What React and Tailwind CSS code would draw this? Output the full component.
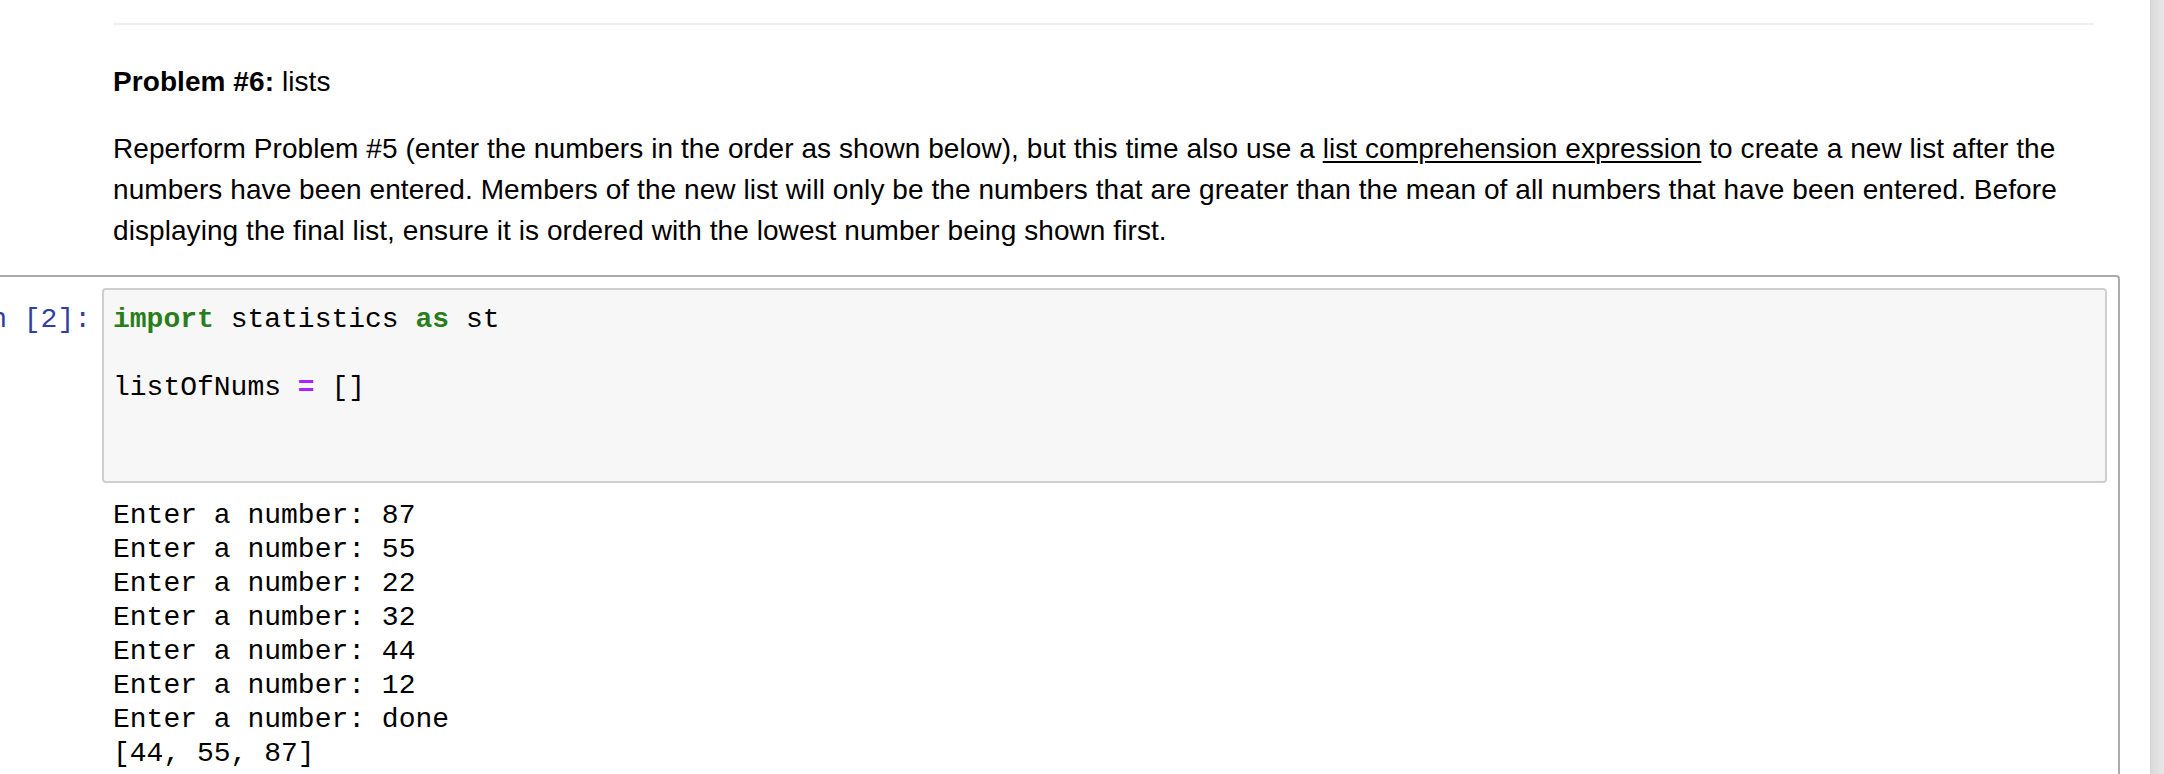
import React from "react";

const sans = "font-['Liberation_Sans',Arial,sans-serif]";
const mono = "font-['Liberation_Mono','DejaVu_Sans_Mono',monospace]";

function CodeLine({ children }) {
  return <div className="h-[34px] leading-[34px] whitespace-pre">{children}</div>;
}

export default function App() {
  const outputs = ["87", "55", "22", "32", "44", "12", "done"];
  return (
    <div className="flex w-full h-[774px] overflow-hidden bg-white text-black">
      <div className="flex-1 min-w-0 overflow-hidden">
        <div className={`pt-[23px] pl-[113px] pr-[56px] ${sans} text-[28px] tracking-[0.07px]`}>
          <div className="h-[2px] bg-[#eeeeee]" />
          <p className="mt-[37px] leading-[40px]">
            <strong className="font-bold">Problem #6:</strong> lists
          </p>
          <p className="mt-[26px] leading-[41px]">
            Reperform Problem #5 (enter the numbers in the order as shown below), but this time also use a{" "}
            <u className="decoration-2 underline-offset-[3px]">list comprehension expression</u> to
            create a new list after the numbers have been entered. Members of the new list will only be the numbers
            that are greater than the mean of all numbers that have been entered. Before displaying the final list,
            ensure it is ordered with the lowest number being shown first.
          </p>
        </div>

        <div className={`mt-[24px] -ml-[40px] mr-[30px] border-2 border-[#ababab] rounded-[4px] p-[11px] ${mono} text-[28px]`}>
          <div className="flex">
            <div className="w-[129px] shrink-0 pt-[15px] pr-[11px] text-right text-[#303f9f] leading-[34px] whitespace-pre">
              In [2]:
            </div>
            <div className="flex-1 min-w-0 bg-[#f7f7f7] border-2 border-[#cfcfcf] rounded-[4px] pt-[13px] pb-[8px] pl-[9px]">
              <CodeLine>
                <span className="text-[#2a7d1c] font-bold">import</span> statistics{" "}
                <span className="text-[#2a7d1c] font-bold">as</span> st
              </CodeLine>
              <CodeLine> </CodeLine>
              <CodeLine>
                listOfNums <span className="text-[#aa22ff] font-bold">=</span> []
              </CodeLine>
              <CodeLine> </CodeLine>
              <CodeLine> </CodeLine>
            </div>
          </div>
          <div className="flex mt-[16px]">
            <div className="w-[129px] shrink-0" />
            <div className="flex-1 min-w-0 pl-[11px]">
              {outputs.map((v, i) => (
                <CodeLine key={i}>Enter a number: {v}</CodeLine>
              ))}
              <CodeLine>[44, 55, 87]</CodeLine>
            </div>
          </div>
        </div>
      </div>
      <div className="w-[14px] shrink-0 bg-gradient-to-r from-[#d9d9d9] to-[#e8e8e8] border-l border-[#d2d2d2]" />
    </div>
  );
}
